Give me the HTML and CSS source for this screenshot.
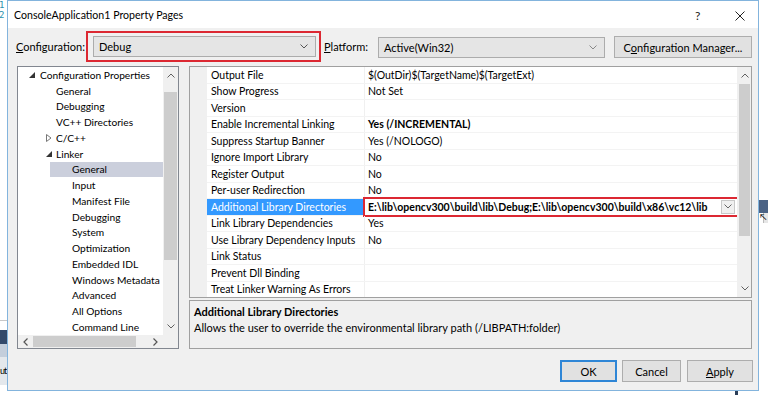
FILE: index.html
```html
<!DOCTYPE html>
<html>
<head>
<meta charset="utf-8">
<link rel="stylesheet" href="styles.css">
</head>
<body>
<div class="screen">
  <div class="strip-left">
    <div class="ln">1</div>
    <div class="ln">2</div>
    <div class="sl-space"></div>
    <div class="sl-line"></div>
    <div class="sl-dark"></div>
    <div class="sl-mid"></div>
    <div class="sl-text">ut</div>
  </div>
  <div class="center">
    <div class="dialog">
      <div class="titlebar">
        <span class="title">ConsoleApplication1 Property Pages</span>
        <span class="help">?</span>
        <span class="close"><svg width="10" height="10" viewBox="0 0 10 10"><path d="M0.5 0.5 L9.5 9.5 M9.5 0.5 L0.5 9.5" stroke="#222" stroke-width="1"/></svg></span>
      </div>
      <div class="body">
        <div class="config-row">
          <label class="lbl lbl-config"><u>C</u>onfiguration:</label>
          <div class="redbox">
            <div class="combo combo-config"><span>Debug</span><svg class="chev" width="8" height="5" viewBox="0 0 8 5"><polyline points="0.5,0.5 4,4 7.5,0.5" fill="none" stroke="#555" stroke-width="1"/></svg></div>
          </div>
          <label class="lbl lbl-platform"><u>P</u>latform:</label>
          <div class="combo combo-platform"><span>Active(Win32)</span><svg class="chev" width="8" height="5" viewBox="0 0 8 5"><polyline points="0.5,0.5 4,4 7.5,0.5" fill="none" stroke="#888" stroke-width="1"/></svg></div>
          <button class="btn btn-cm">C<u>o</u>nfiguration Manager...</button>
        </div>
        <div class="main">
          <div class="tree">
            <div class="tree-top">
              <div class="tree-list">
                <div class="tr l1"><svg class="tw" width="6" height="6" viewBox="0 0 6 6"><polygon points="6,0 6,6 0,6" fill="#333"/></svg>Configuration Properties</div>
                <div class="tr l2">General</div>
                <div class="tr l2">Debugging</div>
                <div class="tr l2">VC++ Directories</div>
                <div class="tr l2 has"><svg class="tw tw-c" width="6" height="8" viewBox="0 0 6 8"><polygon points="0.5,0.5 5,4 0.5,7.5" fill="none" stroke="#777" stroke-width="1"/></svg>C/C++</div>
                <div class="tr l2 has"><svg class="tw" width="6" height="6" viewBox="0 0 6 6"><polygon points="6,0 6,6 0,6" fill="#333"/></svg>Linker</div>
                <div class="tr l3 sel">General</div>
                <div class="tr l3">Input</div>
                <div class="tr l3">Manifest File</div>
                <div class="tr l3">Debugging</div>
                <div class="tr l3">System</div>
                <div class="tr l3">Optimization</div>
                <div class="tr l3">Embedded IDL</div>
                <div class="tr l3">Windows Metadata</div>
                <div class="tr l3">Advanced</div>
                <div class="tr l3">All Options</div>
                <div class="tr l3">Command Line</div>
              </div>
              <div class="vscroll tree-vs">
                <div class="arr"><svg width="8" height="5" viewBox="0 0 8 5"><polyline points="0.5,4.5 4,1 7.5,4.5" fill="none" stroke="#606060" stroke-width="1"/></svg></div>
                <div class="track"><div class="thumb tree-thumb"></div></div>
                <div class="arr"><svg width="8" height="5" viewBox="0 0 8 5"><polyline points="0.5,0.5 4,4 7.5,0.5" fill="none" stroke="#606060" stroke-width="1"/></svg></div>
              </div>
            </div>
            <div class="tree-bottom">
              <div class="harr"><svg width="5" height="8" viewBox="0 0 5 8"><polyline points="4.5,0.5 1,4 4.5,7.5" fill="none" stroke="#555" stroke-width="1.2"/></svg></div>
              <div class="htrack"><div class="hthumb"></div></div>
              <div class="harr"><svg width="5" height="8" viewBox="0 0 5 8"><polyline points="0.5,0.5 4,4 0.5,7.5" fill="none" stroke="#555" stroke-width="1.2"/></svg></div>
              <div class="corner"></div>
            </div>
          </div>
          <div class="right">
            <div class="grid">
              <div class="gutter"></div>
              <div class="rows">
                <div class="row"><div class="nm">Output File</div><div class="vl">$(OutDir)$(TargetName)$(TargetExt)</div></div>
                <div class="row"><div class="nm">Show Progress</div><div class="vl">Not Set</div></div>
                <div class="row"><div class="nm">Version</div><div class="vl"></div></div>
                <div class="row"><div class="nm">Enable Incremental Linking</div><div class="vl b">Yes (/INCREMENTAL)</div></div>
                <div class="row"><div class="nm">Suppress Startup Banner</div><div class="vl">Yes (/NOLOGO)</div></div>
                <div class="row"><div class="nm">Ignore Import Library</div><div class="vl">No</div></div>
                <div class="row"><div class="nm">Register Output</div><div class="vl">No</div></div>
                <div class="row"><div class="nm">Per-user Redirection</div><div class="vl">No</div></div>
                <div class="row selrow"><div class="nm">Additional Library Directories</div><div class="vl b edit"><span class="edtext">E:\lib\opencv300\build\lib\Debug;E:\lib\opencv300\build\x86\vc12\lib</span><span class="ddbtn"><svg width="8" height="5" viewBox="0 0 8 5"><polyline points="0.5,0.5 4,4 7.5,0.5" fill="none" stroke="#666" stroke-width="1"/></svg></span></div></div>
                <div class="row"><div class="nm">Link Library Dependencies</div><div class="vl">Yes</div></div>
                <div class="row"><div class="nm">Use Library Dependency Inputs</div><div class="vl">No</div></div>
                <div class="row"><div class="nm">Link Status</div><div class="vl"></div></div>
                <div class="row"><div class="nm">Prevent Dll Binding</div><div class="vl"></div></div>
                <div class="row"><div class="nm">Treat Linker Warning As Errors</div><div class="vl"></div></div>
              </div>
              <div class="vscroll grid-vs">
                <div class="arr"><svg width="8" height="5" viewBox="0 0 8 5"><polyline points="0.5,4.5 4,1 7.5,4.5" fill="none" stroke="#606060" stroke-width="1"/></svg></div>
                <div class="track"><div class="thumb grid-thumb"></div></div>
                <div class="arr"><svg width="8" height="5" viewBox="0 0 8 5"><polyline points="0.5,0.5 4,4 7.5,0.5" fill="none" stroke="#606060" stroke-width="1"/></svg></div>
              </div>
            </div>
            <div class="desc">
              <div class="desc-title">Additional Library Directories</div>
              <div class="desc-text">Allows the user to override the environmental library path (/LIBPATH:folder)</div>
            </div>
          </div>
        </div>
        <div class="buttons">
          <button class="btn btn-ok">OK</button>
          <button class="btn btn-cancel">Cancel</button>
          <button class="btn btn-apply"><u>A</u>pply</button>
        </div>
      </div>
    </div>
    <div class="bottom-strip"><div class="bs-bar"></div></div>
  </div>
  <div class="strip-right">
    <div class="sr-space"></div>
    <div class="sr-dark"></div>
    <div class="sr-light"><span class="sr-glyph">↖</span></div>
  </div>
</div>
</body>
</html>
```
FILE: styles.css
```css
* { box-sizing: border-box; }
html, body { margin: 0; padding: 0; }
body {
  width: 768px;
  height: 395px;
  overflow: hidden;
  background: #fff;
  font-family: Lato, "Noto Sans", sans-serif;
  font-size: 11px;
  color: #000;
}
u { text-decoration: underline; text-underline-offset: 1px; }
.screen { display: flex; width: 768px; height: 395px; }

/* outside strips */
.strip-left { width: 7px; display: flex; flex-direction: column; overflow: hidden; }
.ln { font-size: 9px; line-height: 10px; color: #2b91af; margin-left: -1px; font-family: "DejaVu Sans Mono", monospace; }
.sl-space { height: 300px; }
.sl-line { height: 10px; border-top: 1px solid #c8c8c8; }
.sl-dark { height: 14px; background: #33496a; }
.sl-mid { height: 13px; background: #c4cedb; }
.sl-text { height: 28px; background: #e4e8ec; font-size: 9px; line-height: 28px; letter-spacing: -1px; }
.center { width: 752px; display: flex; flex-direction: column; }
.strip-right { width: 9px; display: flex; flex-direction: column; }
.sr-space { height: 200px; }
.sr-dark { height: 13px; background: #4b6385; }
.sr-light { height: 10px; background: #e6e6e6; border-left: 1px solid #bbb; margin-left: 4px; font-size: 9px; line-height: 8px; }
.sr-glyph { margin-left: -4px; }
.bottom-strip { height: 4px; }
.bs-bar { width: 3px; height: 4px; background: #2c3e58; margin-left: 728px; }

/* dialog */
.dialog {
  width: 752px;
  height: 391px;
  border: 1px solid #83b4dd;
  background: #f0f0f0;
  display: flex;
  flex-direction: column;
}
.titlebar {
  height: 27px;
  flex: none;
  background: #fff;
  display: flex;
  align-items: center;
  padding-left: 6px;
  font-size: 10.6px;
}
.title { flex: 1; padding-top: 1px; }
.help { width: 12px; margin-right: 28px; font-size: 12px; color: #222; padding-top: 2px; }
.close { width: 10px; margin-right: 13px; display: flex; align-items: center; padding-top: 2px; }

.body { flex: 1; padding: 3px 5px 0 9px; display: flex; flex-direction: column; }
.config-row { height: 31px; flex: none; display: flex; align-items: center; }
.lbl { display: block; }
.lbl-config { width: 70px; margin-left: -1px; }
.lbl-platform { width: 54px; margin-left: 3px; }
.redbox { width: 235px; height: 31px; border: 2px solid #dc2832; padding: 3px 3px 3px 5px; }
.combo {
  height: 21px;
  background: #e5e5e5;
  border: 1px solid #acacac;
  display: flex;
  align-items: center;
  justify-content: space-between;
  padding: 0 7px 0 5px;
}
.combo-config { width: 223px; }
.combo-platform { width: 227px; margin-top: 1px; }
.btn {
  font-family: Lato, "Noto Sans", sans-serif;
  font-size: 11px;
  color: #000;
  background: #e1e1e1;
  border: 1px solid #adadad;
  padding: 0;
  margin: 0;
}
.btn-cm { width: 138px; height: 22px; margin-left: 9px; margin-top: 1px; }

.main { display: flex; flex: none; margin-top: 4px; height: 283px; }
.tree {
  width: 162px;
  height: 283px;
  border: 1px solid #828790;
  background: #fff;
  font-size: 10.2px;
}
.tree-top { height: 268px; display: flex; overflow: hidden; }
.tree-list { width: 145px; overflow: hidden; }
.tree-bottom { height: 13px; display: flex; background: #f0f0f0; }
.tr { height: 15.75px; display: flex; align-items: center; white-space: nowrap; position: relative; }
.tr .tw { position: absolute; }
.l1 { padding-left: 22px; }
.l1 .tw { left: 11px; top: 5px; }
.l2 { padding-left: 38px; }
.l2 .tw { left: 28px; top: 5px; }
.l2 .tw-c { top: 4px; }
.l3 { padding-left: 54px; }
.sel { background: #cbcfdc; margin-left: 32px; padding-left: 22px; }

.vscroll { display: flex; flex-direction: column; background: #f0f0f0; }
.tree-vs { width: 15px; }
.arr { height: 17px; display: flex; align-items: center; justify-content: center; flex: none; }
.track { flex: 1; }
.thumb { background: #cdcdcd; margin: 0 1px; }
.tree-thumb { margin-top: 8px; height: 168px; }
.harr { width: 15px; height: 13px; display: flex; justify-content: center; align-items: center; }
.htrack { width: 115px; height: 13px; display: flex; align-items: center; }
.hthumb { width: 103px; height: 11px; background: #cdcdcd; }
.corner { width: 15px; height: 13px; background: #f0f0f0; }

.right { margin-left: 10px; width: 563px; display: flex; flex-direction: column; }
.grid {
  height: 232px;
  flex: none;
  border: 1px solid #a0a0a0;
  background: #fff;
  display: flex;
  font-size: 10.5px;
}
.gutter { width: 17px; background: #f0f0f0; }
.rows { flex: 1; overflow: hidden; }
.row { height: 16.5px; display: flex; border-bottom: 1px solid #f3f3f3; }
.nm { width: 158px; padding-left: 4px; border-right: 1px solid #f0f0f0; display: flex; align-items: center; white-space: nowrap; overflow: hidden; }
.vl { flex: 1; padding-left: 3px; display: flex; align-items: center; white-space: nowrap; }
.b { font-weight: bold; }
.selrow .nm { background: #3399ff; color: #fff; }
.edit { outline: 2px solid #dc2832; justify-content: space-between; padding-right: 2px; }
.ddbtn { width: 14px; height: 14px; background: #f0f0f0; border: 1px solid #c8c8c8; display: flex; align-items: center; justify-content: center; }
.grid-vs { width: 14px; border-left: 1px solid #f0f0f0; }
.grid-thumb { height: 152px; }

.desc {
  margin-top: 2px;
  height: 49px;
  flex: none;
  border: 1px solid #a0a0a0;
  background: #f0f0f0;
  padding: 3px 4px;
}
.desc-title { font-weight: bold; line-height: 15px; }
.desc-text { line-height: 17px; }

.buttons { display: flex; flex: none; justify-content: flex-end; margin-top: 11px; }
.btn-ok, .btn-cancel, .btn-apply { height: 22px; }
.btn-ok { width: 57px; border: 2px solid #2f86d6; }
.btn-cancel { width: 59px; margin-left: 5px; }
.btn-apply { width: 66px; margin-left: 6px; }
```
